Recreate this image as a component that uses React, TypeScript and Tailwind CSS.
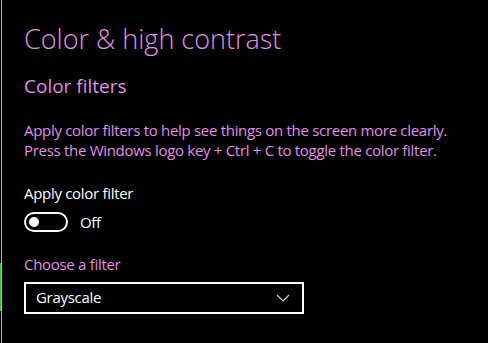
import React from 'react';

const violet = 'text-[#e38ee8]';

export default function App() {
  return (
    <div className="flex h-[343px] w-[488px] overflow-hidden bg-black font-['Open_Sans',sans-serif]">
      {/* left edge: green focus strip + violet divider */}
      <div className="flex w-px flex-col">
        <div className="h-[263px]" />
        <div className="h-[48px] bg-[#3fc33f]" />
      </div>
      <div className="w-px bg-[#e38ee8]" />

      <div className="flex flex-1 flex-col pl-[22px]">
        <h1 className={`mt-[21px] text-[27px] font-light leading-[36px] ${violet}`}>
          Color &amp; high contrast
        </h1>
        <h2 className={`mt-[16px] text-[19px] leading-[26px] ${violet}`}>Color filters</h2>

        <p className={`mt-[21px] text-[15px] leading-[20px] tracking-[-0.3px] ${violet}`}>
          Apply color filters to help see things on the screen more clearly.
          <br />
          Press the Windows logo key + Ctrl + C to toggle the color filter.
        </p>

        <div className="mt-[23px] text-[15px] leading-[20px] tracking-[-0.3px] text-white">Apply color filter</div>
        <div className="mt-[8px] flex items-center gap-[12px]">
          <button className="flex h-[20px] w-[44px] items-center rounded-full border-2 border-white px-[3px]">
            <span className="h-[10px] w-[10px] rounded-full bg-white" />
          </button>
          <span className="text-[15px] tracking-[-0.3px] text-white">Off</span>
        </div>

        <div className={`mt-[20px] text-[15px] leading-[20px] tracking-[-0.3px] ${violet}`}>Choose a filter</div>
        <button className="mt-[8px] flex h-[32px] w-[280px] items-center justify-between border-2 border-white px-[10px] text-[15px] tracking-[-0.3px] text-white">
          <span>Grayscale</span>
          <svg width="14" height="8" viewBox="0 0 14 8" fill="none" className="mr-[2px]">
            <path d="M1 1l6 6 6-6" stroke="#d0d0d0" strokeWidth="1.2" />
          </svg>
        </button>
      </div>
    </div>
  );
}
